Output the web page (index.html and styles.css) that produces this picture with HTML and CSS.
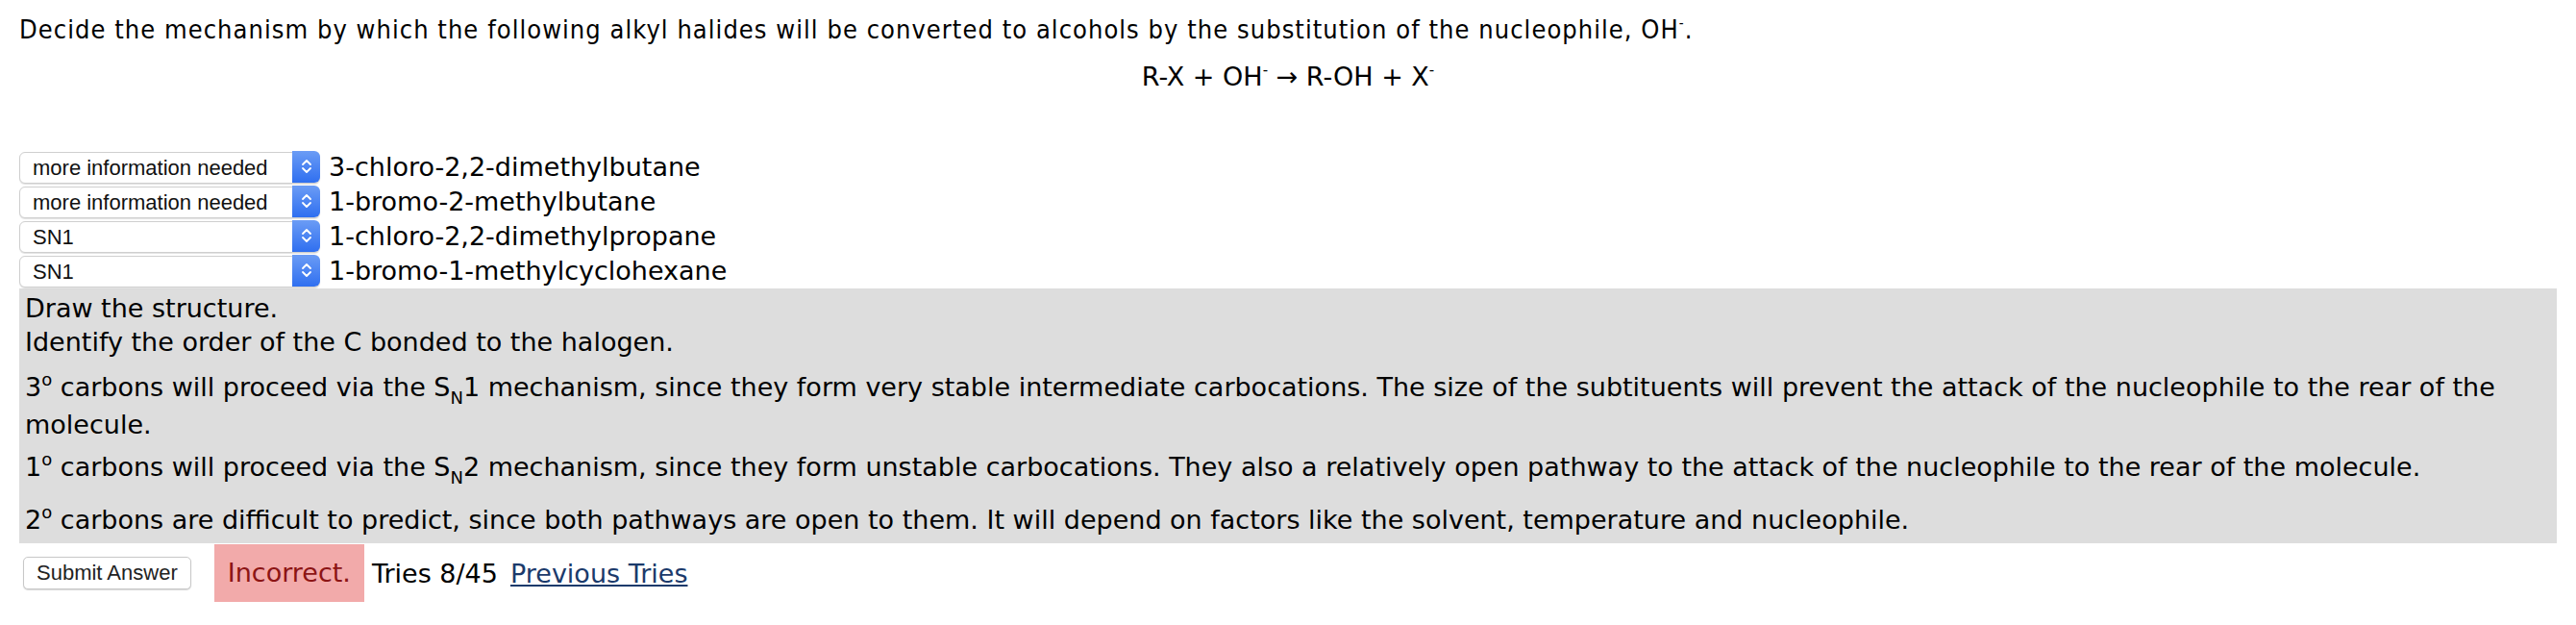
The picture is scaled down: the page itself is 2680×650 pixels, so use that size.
FILE: index.html
```html
<!DOCTYPE html>
<html lang="en">

<head>
    <title>Substitution Mechanisms</title>
    <meta charset="utf-8">
    <link rel="stylesheet" href="styles.css">
</head>

<body>
    <div id="problem">
        <p class="problem_prompt">Decide the mechanism by which the following alkyl halides will be converted to alcohols by the substitution of the nucleophile, OH<sup class="charge">-</sup>.</p>
        <p class="problem_equation">R-X + OH<sup class="charge">-</sup> &rarr; R-OH + X<sup class="charge">-</sup></p>

        <div class="problem_options">
            <div class="problem_option-row">
                <div class="problem_select">
                    <select>
                        <option>SN1</option>
                        <option>SN2</option>
                        <option selected>more information needed</option>
                    </select>
                    <span class="problem_select-arrow">
                        <svg width="14" height="22" viewBox="0 0 14 22"><path d="M3 9 L7 5 L11 9 M3 13 L7 17 L11 13" fill="none" stroke="#fff" stroke-width="1.8" stroke-linecap="round" stroke-linejoin="round"/></svg>
                    </span>
                </div>
                <label>3-chloro-2,2-dimethylbutane</label>
            </div>
            <div class="problem_option-row">
                <div class="problem_select">
                    <select>
                        <option>SN1</option>
                        <option>SN2</option>
                        <option selected>more information needed</option>
                    </select>
                    <span class="problem_select-arrow">
                        <svg width="14" height="22" viewBox="0 0 14 22"><path d="M3 9 L7 5 L11 9 M3 13 L7 17 L11 13" fill="none" stroke="#fff" stroke-width="1.8" stroke-linecap="round" stroke-linejoin="round"/></svg>
                    </span>
                </div>
                <label>1-bromo-2-methylbutane</label>
            </div>
            <div class="problem_option-row">
                <div class="problem_select">
                    <select>
                        <option selected>SN1</option>
                        <option>SN2</option>
                        <option>more information needed</option>
                    </select>
                    <span class="problem_select-arrow">
                        <svg width="14" height="22" viewBox="0 0 14 22"><path d="M3 9 L7 5 L11 9 M3 13 L7 17 L11 13" fill="none" stroke="#fff" stroke-width="1.8" stroke-linecap="round" stroke-linejoin="round"/></svg>
                    </span>
                </div>
                <label>1-chloro-2,2-dimethylpropane</label>
            </div>
            <div class="problem_option-row">
                <div class="problem_select">
                    <select>
                        <option selected>SN1</option>
                        <option>SN2</option>
                        <option>more information needed</option>
                    </select>
                    <span class="problem_select-arrow">
                        <svg width="14" height="22" viewBox="0 0 14 22"><path d="M3 9 L7 5 L11 9 M3 13 L7 17 L11 13" fill="none" stroke="#fff" stroke-width="1.8" stroke-linecap="round" stroke-linejoin="round"/></svg>
                    </span>
                </div>
                <label>1-bromo-1-methylcyclohexane</label>
            </div>
        </div>

        <div class="problem_hint">
            <div>Draw the structure.<br>Identify the order of the C bonded to the halogen.</div>
            <p class="hint_tertiary">3<sup>o</sup> carbons will proceed via the S<sub>N</sub>1 mechanism, since they form very stable intermediate carbocations. The size of the subtituents will prevent the attack of the nucleophile to the rear of the <span>molecule.</span></p>
            <p class="hint_primary">1<sup>o</sup> carbons will proceed via the S<sub>N</sub>2 mechanism, since they form unstable carbocations. They also a relatively open pathway to the attack of the nucleophile to the rear of the molecule.</p>
            <p class="hint_secondary">2<sup>o</sup> carbons are difficult to predict, since both pathways are open to them. It will depend on factors like the solvent, temperature and nucleophile.</p>
        </div>

        <div class="problem_submit-row">
            <button id="problem_submit-button">Submit Answer</button>
            <span class="problem_incorrect">Incorrect.</span>
            <span>Tries 8/45</span>
            <a href="#" class="problem_previous">Previous Tries</a>
        </div>
    </div>
</body>

</html>
```

FILE: styles.css
```css
body {
    font-family: "DejaVu Sans", Verdana, sans-serif;
    font-size: 27px;
    color: #000;
    background: #fff;
    margin: 0;
}

#problem {
    padding: 13px 20px 0 20px;
}

.problem_prompt {
    margin: 0;
    line-height: 36px;
    font-family: "DejaVu Sans Condensed", "DejaVu Sans", sans-serif;
    font-stretch: condensed;
    letter-spacing: 1.05px;
}

.problem_equation {
    margin: 13px 0 0 0;
    text-align: center;
    line-height: 36px;
}

sup.charge {
    font-size: 15px;
    vertical-align: 11px;
    line-height: 0;
}

.problem_options {
    margin-top: 57px;
}

.problem_option-row {
    display: flex;
    align-items: center;
    height: 36px;
}

.problem_option-row label {
    margin-left: 9px;
}

.problem_select {
    position: relative;
    width: 313px;
    height: 33px;
}

.problem_select select {
    appearance: none;
    -webkit-appearance: none;
    width: 100%;
    height: 100%;
    margin: 0;
    padding: 0 36px 0 13px;
    font-family: "Liberation Sans", Arial, sans-serif;
    font-size: 22px;
    color: #111;
    background: #fff;
    border: 1px solid #cfcfcf;
    border-radius: 6px;
    box-shadow: 0 1px 1px rgba(0, 0, 0, 0.12);
}

.problem_select-arrow {
    position: absolute;
    top: 0;
    right: 0;
    width: 29px;
    height: 33px;
    display: flex;
    align-items: center;
    justify-content: center;
    background: linear-gradient(#6b9cf5, #2f6ff0);
    border-radius: 0 6px 6px 0;
    pointer-events: none;
}

.problem_hint {
    background: #dddddd;
    margin-top: 1px;
    padding: 3px 6px 5px 6px;
    line-height: 35px;
}

.problem_hint p {
    margin: 0;
    line-height: 39px;
}

.problem_hint .hint_tertiary {
    margin-top: 10px;
}

.problem_hint .hint_primary {
    margin-top: 5px;
}

.problem_hint .hint_secondary {
    margin-top: 16px;
}

.problem_hint sup {
    font-size: 18px;
    vertical-align: 11px;
    line-height: 0;
}

.problem_hint sub {
    font-size: 18px;
    vertical-align: -8px;
    line-height: 0;
}

.problem_submit-row {
    display: flex;
    align-items: center;
    height: 60px;
    margin-top: 1px;
}

#problem_submit-button {
    margin-left: 4px;
    height: 34px;
    padding: 0 13px;
    font-family: "Liberation Sans", Arial, sans-serif;
    font-size: 22px;
    color: #222;
    background: #fff;
    border: 1px solid #c8c8c8;
    border-radius: 5px;
    box-shadow: 0 1px 1px rgba(0, 0, 0, 0.15);
}

.problem_incorrect {
    margin-left: 24px;
    margin-right: 8px;
    height: 60px;
    line-height: 60px;
    padding: 0 14px;
    background: #f2aaaa;
    color: #8c1414;
}

.problem_previous {
    margin-left: 13px;
    color: #1b3a6b;
}
```
